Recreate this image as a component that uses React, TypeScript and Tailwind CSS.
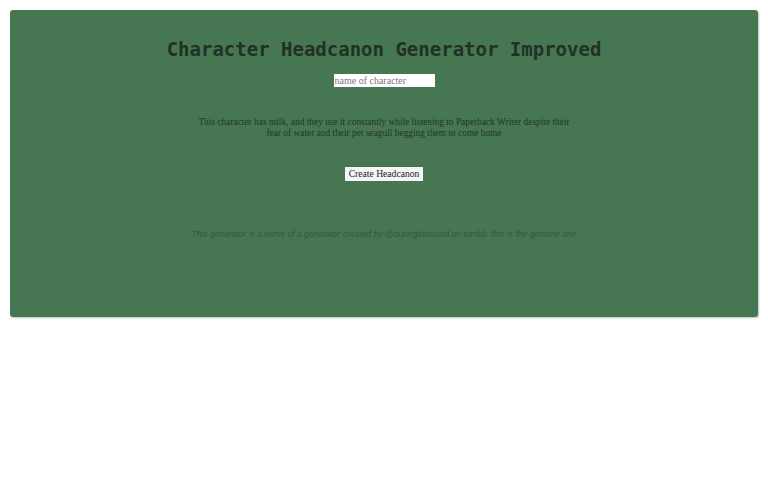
import React, { useState } from 'react';

const App: React.FC = () => {
  const [name, setName] = useState('');

  return (
    <div className="min-h-screen bg-white p-[10px]">
      {/* Generator card */}
      <div className="h-[307px] rounded-[3px] bg-[#477752] shadow-[1px_1px_2px_rgba(0,0,0,0.25)] flex flex-col items-center pt-[27px]">
        <h1 className="font-['DejaVu_Sans_Mono',monospace] font-bold text-[19px] leading-[24px] text-[#223126]">
          Character Headcanon Generator Improved
        </h1>

        <input
          type="text"
          placeholder="name of character"
          value={name}
          onChange={(e) => setName(e.target.value)}
          className="mt-[13px] w-[101px] h-[13px] bg-white px-[1px] font-['Liberation_Serif',serif] text-[10px] leading-[13px] text-[#333] placeholder:text-[#777] outline-none"
        />

        <p className="mt-[30px] w-[380px] text-center font-['Liberation_Serif',serif] text-[9.4px] leading-[11px] text-[#253528]">
          This character has milk, and they use it constantly while listening to Paperback Writer despite their fear of water and their pet seagull begging them to come home
        </p>

        <button className="mt-[28px] h-[14px] px-[4px] bg-[#f4f4f4] font-['Liberation_Serif',serif] text-[9.6px] leading-[14px] text-[#222]">
          Create Headcanon
        </button>

        <p className="mt-[47px] font-['Liberation_Sans',sans-serif] italic text-[8.5px] leading-[12px] text-[#33573b]">
          This generator is a remix of a generator created by @outergirlwound on tumblr. this is the genuine one
        </p>
      </div>
    </div>
  );
};

export default App;
